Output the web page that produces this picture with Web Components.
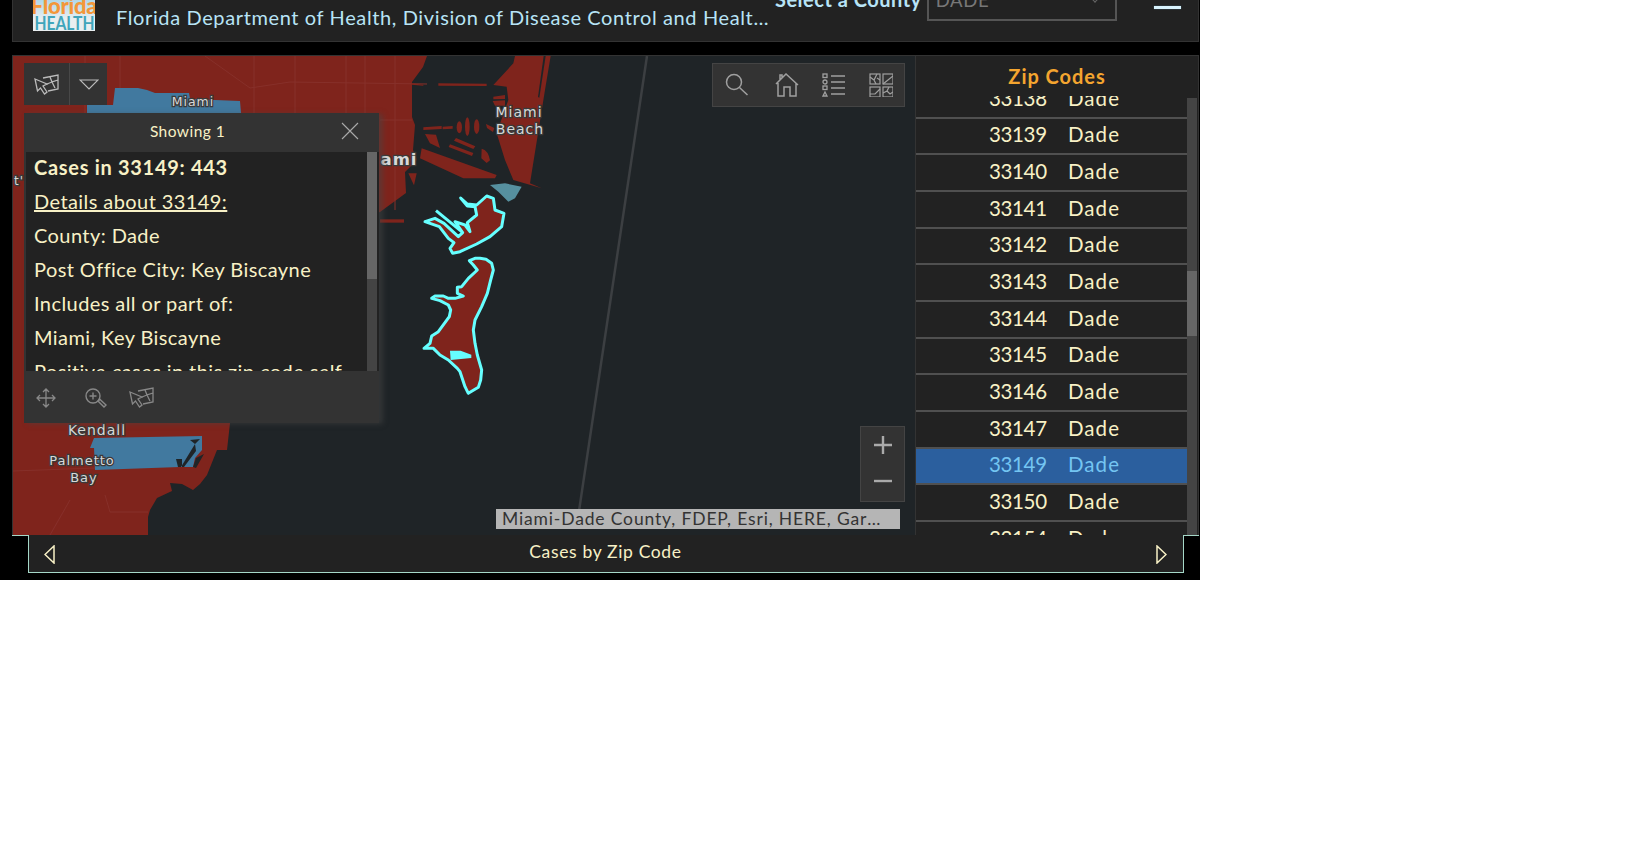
<!DOCTYPE html>
<html lang="en">
<head>
<meta charset="utf-8">
<title>Cases by Zip Code</title>
<style>
  html, body { margin: 0; background: #fff; }
</style>
</head>
<body>
<dash-shell>
  <dash-header slot="header" heading="Florida Department of Health, Division of Disease Control and Health Protection"></dash-header>
  <map-view slot="map">
    <map-popup></map-popup>
  </map-view>
  <zip-panel slot="panel"></zip-panel>
  <dash-footer slot="footer" label="Cases by Zip Code"></dash-footer>
</dash-shell>

<script>
const FONT = 'Lato, "Open Sans", sans-serif';
const CREAM = "#f8f1c6";

// shared icons, all drawn with currentColor strokes
const ICONS = {
    pick: `<svg viewBox="0 0 25 21" fill="none" stroke="currentColor" stroke-width="1.300"><path d="M1 5l12 5-4 2 4 6-2.500 2-4-6-3 3z"/><path d="M9 4l15-3v14l-10 2M16 3l2 5-5 2M24 6l-6 2 3 6"/></svg>`,
    search: `<svg viewBox="0 0 24 24" fill="none" stroke="currentColor" stroke-width="1.500"><circle cx="9" cy="9" r="7.500"/><path d="M14.500 14.500l8 7.500"/></svg>`,
    home: `<svg viewBox="0 0 24 24" fill="none" stroke="currentColor" stroke-width="1.500"><path d="M1 11L11 1l12 11M3 10v13h6v-9h6v9h6V10M5 7V2h2v3"/></svg>`,
    list: `<svg viewBox="0 0 24 24" fill="none" stroke="currentColor" stroke-width="1.300"><rect x="1" y="1" width="4" height="3.500"/><circle cx="3" cy="9" r="2"/><rect x="1" y="13" width="4" height="3.500"/><path d="M3 19l2 4H1zM9 3h14M9 9h14M9 15h14M9 21h14"/></svg>`,
    grid: `<svg viewBox="0 0 24 24" fill="none" stroke="currentColor" stroke-width="1.200"><rect x="1" y="1" width="10" height="10"/><rect x="14" y="1" width="10" height="10"/><rect x="1" y="14" width="10" height="10"/><rect x="14" y="14" width="10" height="10"/><path d="M1 4l4 3 3-6M5 7l2 4M8 5l3 2M14 11l10-8M1 21h5l5-5M14 20l4-2 2-4M18 18l3 3 3-2"/></svg>`,
    move: `<svg viewBox="0 0 20 20" fill="none" stroke="currentColor" stroke-width="1.300"><path d="M10 1v18M1 10h18M7 4l3-3 3 3M7 16l3 3 3-3M4 7l-3 3 3 3M16 7l3 3-3 3"/></svg>`,
    zoomTo: `<svg viewBox="0 0 22 20" fill="none" stroke="currentColor" stroke-width="1.400"><circle cx="8" cy="8" r="7"/><path d="M8 4.500v7M4.500 8h7M13 13l2-1.500 6 5.500-2 2z"/></svg>`,
    close: `<svg viewBox="0 0 18 18" fill="none" stroke="currentColor" stroke-width="1.100"><path d="M1 1l16 16M17 1L1 17"/></svg>`
};

class DashShell extends HTMLElement {
    constructor() {
        super();
        this.attachShadow({ mode: "open" }).innerHTML = `
        <style>
            :host { display: flex; flex-direction: column; box-sizing: border-box; width: 1200px; height: 580px;
                padding: 0 1px 0 12px; background: #000; overflow: hidden; font-family: ${FONT}; }
            .main { display: flex; height: 480px; margin-top: 13px; box-sizing: border-box;
                border: 1px solid #333; border-bottom: 0; background: #222; }
        </style>
        <slot name="header"></slot>
        <div class="main"><slot name="map"></slot><slot name="panel"></slot></div>
        <slot name="footer"></slot>`;
    }
}

class DashHeader extends HTMLElement {
    connectedCallback() {
        this.attachShadow({ mode: "open" }).innerHTML = `
        <style>
            :host { display: flex; align-items: flex-start; box-sizing: border-box; height: 42px; overflow: hidden;
                background: #222; border: 1px solid #333; border-top: 0; }
            .logo { flex: none; display: flex; flex-direction: column; align-items: center; justify-content: flex-end;
                width: 62px; height: 42px; margin: -11px 0 0 20px; overflow: hidden; background: linear-gradient(#8fcbe6, #e9eef0 72%);
                font-weight: 700; }
            .logo b { color: #f3973a; font-size: 22px; line-height: 18px; letter-spacing: -.3px; }
            .logo i { display: block; color: #41a5bb; font-size: 19.500px; font-style: normal; line-height: 16px; transform: scaleX(.8); }
            .title { flex: none; width: 653px; margin: 2px 0 0 21px; color: #b8e4f6; font-size: 20px; line-height: 30px;
                letter-spacing: .62px; white-space: nowrap; overflow: hidden; text-overflow: ellipsis; }
            .county { flex: none; margin: -14px 0 0 6px; color: #b8e4f6; font-size: 20px; font-weight: 700; line-height: 26px; letter-spacing: .5px; }
            .select { flex: none; display: flex; justify-content: space-between; box-sizing: border-box; width: 190px; height: 40px;
                margin: -19px 0 0 5px; padding: 5px 16px 0 7px; border: 2px solid #555; color: #777; font-size: 18.500px; line-height: 24px; letter-spacing: .7px; }
            .select span { width: 7px; height: 7px; margin-top: 5px; border: solid #666; border-width: 0 1px 1px 0; transform: rotate(45deg); }
            .burger { flex: none; width: 27px; height: 3px; margin: 6px 0 0 37px; background: #d8f2fc; box-shadow: 0 0 1px #7fc4e4; }
        </style>
        <div class="logo"><b>Florida</b><i>HEALTH</i></div>
        <div class="title">${this.getAttribute("heading")}</div>
        <div class="county">Select a County</div>
        <div class="select">DADE<span></span></div>
        <div class="burger"></div>`;
    }
}

class MapView extends HTMLElement {
    constructor() {
        super();
        this.attachShadow({ mode: "open" }).innerHTML = `
        <style>
            :host { display: block; position: relative; flex: none; width: 902px; height: 479px; overflow: hidden; background: #1f2427; }
            svg.map { display: block; width: 902px; height: 479px; }
            svg.map text { font-family: "DejaVu Sans", sans-serif; fill: #d8d8d8; stroke: #3a3a3a; stroke-width: 2.500px;
                paint-order: stroke; letter-spacing: 1px; text-anchor: middle; }
            .tools { position: absolute; display: flex; box-sizing: border-box; background: #333; color: #aaa; }
            .pick { left: 11px; top: 7px; width: 83px; height: 42px; color: #bbb; }
            .pick div:first-child { width: 45px; border-right: 1px solid #484848; display: flex; align-items: center; justify-content: center; }
            .pick div:last-child { flex: 1; display: flex; align-items: center; justify-content: center; }
            .pick svg.ico { width: 25px; height: 21px; }
            .pick .tri { width: 20px; height: 11px; }
            .nav { right: 10px; top: 7px; width: 193px; height: 44px; border: 1px solid #444; align-items: center; gap: 23px; padding-left: 12px; color: #a0a0a0; }
            .nav svg { width: 24px; height: 24px; }
            .nav svg:nth-child(2) { margin-left: 3px; }
            .zoom { right: 10px; top: 370px; width: 45px; height: 76px; border: 1px solid #444; flex-direction: column; align-items: center; }
            .zoom span { display: block; height: 36px; width: 100%; position: relative; }
            .zoom svg { display: block; width: 20px; height: 20px; margin: 8px auto 0; }
            .attr { position: absolute; left: 483px; top: 453px; box-sizing: border-box; width: 404px; height: 20px; padding: 0 6px;
                background: #b5b5b5; color: #333; font-size: 17.500px; line-height: 19px; letter-spacing: .85px; white-space: nowrap; overflow: hidden; text-overflow: ellipsis; }
        </style>
        <svg class="map" viewBox="13 56 902 479">
            <!-- mainland -->
            <path fill="#7f241c" d="M13 56H427L423 67 412 82 412 117 415 125 413 150 417 160 405 172 406 193 380 212 370 215 370 240 300 300 230 423 227 450 217 450 207 475 200 484 193 490 182 484 170 483 172 491 157 498 150 510 148 517 148 535H13Z"/>
            <!-- roads -->
            <g fill="none" stroke="#87302a" stroke-width="1">
                <path d="M205 56L250 88 290 82 427 84M85 56V113M120 56V113M254 56V113M295 56V113M346 56V113M365 56V113"/>
                <path d="M13 471L95 468M70 500L50 535M105 495L110 512H148"/>
                <path d="M380 120H412M380 160H412M395 56V210"/>
            </g>
            <!-- zip codes without data -->
            <path fill="#41799f" d="M87 113L87 105 113 105 115 88 138 88 147 90 155 93 189 93 190 99 240 101 241 113Z"/>
            <path fill="#41799f" d="M90 448L94 438 202 436 202 450 195 458 193 467 180 467 95 470 94 448Z"/>
            <path fill="#1f2427" d="M190 440l10 -1-5 5zM195 444l-14 23 3 0 12-16zM176 459h6v8h-4zM196 458l8 -4-8 14-3-1z"/>
            <!-- Miami Beach and the bay islands, drawn in the crop's 3x space -->
            <g transform="translate(380 50) scale(.33333)" fill="#7f241c">
                <path d="M405 18H512L495 120 450 400 485 415 400 390 375 330 350 250 385 150 380 110 340 105 400 40Z"/>
                <path fill="#1f2427" d="M491 18h6l-19 125-4-2Z"/>
                <path d="M95 100l35 4v3l-35-3zM175 100l145 1v7l-145-1zM340 140l35-5v12l-35 1zM338 153l37-2v16h-30zM130 232l55-4v9l-55 3zM188 230l30-2v8l-30 2z"/>
                <ellipse cx="238" cy="232" rx="8" ry="18"/><ellipse cx="262" cy="230" rx="7" ry="28"/><ellipse cx="290" cy="230" rx="8" ry="22"/>
                <path d="M318 222l25 12-4 12-18-12zM135 252l33 2 12 40-30-14zM228 264l58 25-6 8-58-25zM210 283l70 26-4 9-70-27zM305 296q20 5 25 35l-10 8-16-14z"/>
                <path d="M125 295L350 375 345 385 250 385 120 325ZM85 370h25l-8 36z"/>
                <path d="M0 508h72v10H0z"/>
                <path fill="#56909f" d="M330 405L375 400 425 410 405 445 385 455 355 425Z"/>
                <g stroke="#66ffff" stroke-width="9" stroke-linejoin="round">
                    <path d="M320 438L340 445 345 480 372 490 365 530 330 560 290 582 240 605 218 610 210 595 222 578 205 565 178 530 135 515 165 505 192 520 235 560 248 548 225 515 255 525 270 545 262 518 290 495 285 470 262 468 242 444 262 462 290 465Z"/>
                    <path d="M268 632L285 625 300 625 318 628 335 640 340 660 332 690 322 730 305 770 285 810 280 840 285 880 292 915 305 960 302 990 295 1012 265 1030 255 1010 240 965 232 955 205 930 180 915 160 895 132 895 150 880 155 858 175 845 208 800 212 780 205 765 180 752 155 745 165 738 190 738 205 745 225 745 250 738 232 730 232 712 245 710 265 685 292 660 280 645Z"/>
                    <path fill="none" d="M168 482L245 545"/>
                </g>
                <path fill="#66ffff" d="M210 902h32l32 12v10l-62 6z"/>
            </g>
            <path stroke="#3c3f42" stroke-width="2.500" fill="none" d="M647 56L579 511"/>
            <!-- labels -->
            <text x="193" y="106" font-size="12.500">Miami</text>
            <text x="519" y="117" font-size="14">Miami</text>
            <text x="520" y="134" font-size="14">Beach</text>
            <text x="399" y="165" font-size="16.500" font-weight="700">ami</text>
            <text x="19" y="185" font-size="12">t'</text>
            <text x="97" y="435" font-size="14" letter-spacing="1.500">Kendall</text>
            <text x="82" y="465" font-size="13" letter-spacing="1.300">Palmetto</text>
            <text x="84" y="482" font-size="13">Bay</text>
        </svg>
        <div class="tools pick">
            <div>${ICONS.pick.replace("<svg", '<svg class="ico"')}</div>
            <div><svg class="tri" viewBox="0 0 20 11" fill="none" stroke="currentColor" stroke-width="1.200"><path d="M1 1h18l-9 9z"/></svg></div>
        </div>
        <div class="tools nav">${ICONS.search}${ICONS.home}${ICONS.list}${ICONS.grid}</div>
        <div class="tools zoom">
            <span><svg viewBox="0 0 20 20" stroke="#aaa" stroke-width="2.400"><path d="M10 1v18M1 10h18"/></svg></span>
            <span><svg viewBox="0 0 20 20" stroke="#aaa" stroke-width="2.400"><path d="M1 10h18"/></svg></span>
        </div>
        <div class="attr">Miami-Dade County, FDEP, Esri, HERE, Garmin, NGA, USGS</div>
        <slot></slot>`;
    }
}

class MapPopup extends HTMLElement {
    constructor() {
        super();
        this.attachShadow({ mode: "open" }).innerHTML = `
        <style>
            :host { position: absolute; left: 11px; top: 57px; display: flex; flex-direction: column; box-sizing: border-box;
                width: 355px; height: 310px; background: #333; box-shadow: 4px 1px 5px rgba(70,70,70,.5); color: ${CREAM}; }
            .head { flex: none; position: relative; box-sizing: border-box; height: 39px; padding-right: 28px; font-size: 15.500px; letter-spacing: .45px; line-height: 36px; text-align: center; }
            .head svg { position: absolute; right: 20px; top: 9px; width: 18px; height: 18px; color: #aaa; }
            .body { flex: none; display: flex; height: 219px; margin-left: 2px; background: #222; overflow: hidden; }
            .text { flex: none; width: 341px; box-sizing: border-box; padding: 0 8px; font-size: 20px; line-height: 34px; letter-spacing: .42px; white-space: nowrap; overflow: hidden; }
            .text p { margin: 0; }
            .text p:first-child { margin-top: -2px; }
            .text b { font-weight: 700; letter-spacing: .7px; }
            .track { flex: none; width: 10px; background: #444; }
            .thumb { height: 127px; background: #666; }
            .foot { flex: 1; display: flex; align-items: center; margin-top: 2px; padding: 0 0 1px 12px; color: #888; }
            .foot svg { display: block; flex: none; }
            .foot svg:nth-child(2) { margin: 0 22px 0 29px; }
        </style>
        <div class="head">Showing 1${ICONS.close}</div>
        <div class="body">
            <div class="text">
                <p><b>Cases in 33149: 443</b></p>
                <p><u>Details about 33149:</u></p>
                <p>County: Dade</p>
                <p>Post Office City: Key Biscayne</p>
                <p>Includes all or part of:</p>
                <p>Miami, Key Biscayne</p>
                <p>Positive cases in this zip code self</p>
            </div>
            <div class="track"><div class="thumb"></div></div>
        </div>
        <div class="foot">
            ${ICONS.move.replace("<svg", '<svg width="20" height="20"')}
            ${ICONS.zoomTo.replace("<svg", '<svg width="22" height="20"')}
            ${ICONS.pick.replace("<svg", '<svg width="25" height="21"')}
        </div>`;
    }
}

class ZipRow extends HTMLElement {
    connectedCallback() {
        this.attachShadow({ mode: "open" }).innerHTML = `
        <style>
            :host { display: flex; box-sizing: border-box; height: 36.670px; padding: 0 0 3px 73px; align-items: center;
                border-bottom: 2px solid #505050; color: ${CREAM}; font-size: 20.500px; letter-spacing: 1.050px; }
            :host([selected]) { background: #2b5f9e; color: #74c5f2; }
            span { display: block; }
            .zip { width: 79px; letter-spacing: -.35px; }
        </style>
        <span class="zip">${this.getAttribute("zip")}</span><span>Dade</span>`;
    }
}
customElements.define("zip-row", ZipRow);

class ZipPanel extends HTMLElement {
    constructor() {
        super();
        const zips = [33138, 33139, 33140, 33141, 33142, 33143, 33144, 33145, 33146, 33147, 33149, 33150, 33154];
        const rows = zips.map(z => `<zip-row zip="${z}"${z === 33149 ? " selected" : ""}></zip-row>`).join("");
        this.attachShadow({ mode: "open" }).innerHTML = `
        <style>
            :host { flex: 1; display: flex; flex-direction: column; min-width: 0; border-left: 1px solid #333; }
            h2 { flex: none; margin: 0; height: 40px; color: #f4a52f; font-size: 20px; font-weight: 700; letter-spacing: .95px;
                line-height: 41px; text-align: center; }
            .wrap { flex: 1; display: flex; min-height: 0; }
            .list { flex: 1; min-width: 0; overflow: hidden; }
            .rows { margin-top: -14px; }
            .track { flex: none; width: 10px; margin: 2px 1px 0 0; background: #444; }
            .thumb { width: 10px; height: 65px; margin-top: 173px; background: #666; }
        </style>
        <h2>Zip Codes</h2>
        <div class="wrap">
            <div class="list"><div class="rows">${rows}</div></div>
            <div class="track"><div class="thumb"></div></div>
        </div>`;
    }
}

class DashFooter extends HTMLElement {
    connectedCallback() {
        this.attachShadow({ mode: "open" }).innerHTML = `
        <style>
            :host { display: block; flex: none; height: 45px; box-sizing: border-box; border-top: 1.500px solid #a5d8c8; }
            .bar { display: flex; align-items: center; justify-content: space-between; box-sizing: border-box; height: 38.500px; margin: -1.500px 15px 0 16px;
                padding: 2px 16px 0 15px; background: #222; border: 1.500px solid #a5d8c8; border-top: 0; color: ${CREAM}; }
            .label { font-size: 17.500px; letter-spacing: .65px; margin-top: -5px; }
            svg { width: 11px; height: 19px; }
        </style>
        <div class="bar">
            <svg viewBox="0 0 11 19" fill="none" stroke="currentColor" stroke-width="1.500"><path d="M10 1v17L1 9.500z"/></svg>
            <span class="label">${this.getAttribute("label")}</span>
            <svg viewBox="0 0 11 19" fill="none" stroke="currentColor" stroke-width="1.500"><path d="M1 1v17l9-8.500z"/></svg>
        </div>`;
    }
}

customElements.define("dash-shell", DashShell);
customElements.define("dash-header", DashHeader);
customElements.define("map-view", MapView);
customElements.define("map-popup", MapPopup);
customElements.define("zip-panel", ZipPanel);
customElements.define("dash-footer", DashFooter);
</script>
</body>
</html>
